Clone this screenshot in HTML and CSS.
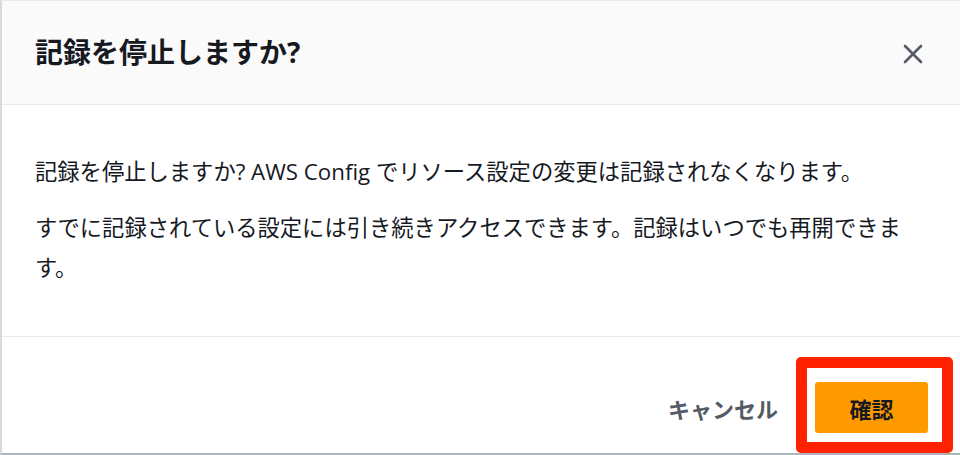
FILE: index.html
```html
<!DOCTYPE html>
<html lang="ja">
<head>
<meta charset="utf-8">
<title>記録を停止しますか?</title>
<link rel="stylesheet" href="styles.css">
</head>
<body>
<div class="modal">
  <div class="modal-header">
    <h2 class="modal-title">記録を停止しますか?</h2>
    <button class="close-btn" aria-label="閉じる">
      <svg width="20" height="20" viewBox="0 0 20 20" fill="none" stroke="#545b64" stroke-width="2.6" stroke-linecap="round">
        <path d="M2 2 L18 18 M18 2 L2 18"/>
      </svg>
    </button>
  </div>
  <div class="modal-body">
    <p>記録を停止しますか? AWS Config でリソース設定の変更は記録されなくなります。</p>
    <p>すでに記録されている設定には引き続きアクセスできます。記録はいつでも再開できます。</p>
  </div>
  <div class="modal-footer">
    <button class="btn-link">キャンセル</button>
    <div class="primary-wrap">
      <button class="btn-primary">確認</button>
      <div class="highlight"></div>
    </div>
  </div>
</div>
</body>
</html>
```

FILE: styles.css
```css
html, body {
  margin: 0;
  padding: 0;
  background: #ffffff;
}
body {
  width: 960px;
  height: 455px;
  overflow: hidden;
  font-family: "Open Sans", "Noto Sans CJK JP", sans-serif;
  color: #16191f;
}
.modal {
  box-sizing: border-box;
  height: 455px;
  border-top: 1px solid #e9ebed;
  border-left: 2px solid #d5dbdb;
  border-bottom: 2px solid #aab7b8;
  display: flex;
  flex-direction: column;
}
.modal-header {
  box-sizing: border-box;
  height: 104px;
  background: #fafafa;
  border-bottom: 1px solid #e9ebed;
  display: flex;
  align-items: center;
  justify-content: space-between;
  padding: 0 37px 0 33px;
}
.modal-title {
  margin: 0 0 4px 0;
  font-size: 28px;
  font-weight: 700;
  font-family: "Open Sans", "Noto Sans CJK JP", sans-serif;
  color: #16191f;
}
.close-btn {
  border: 0;
  background: transparent;
  padding: 0;
  width: 20px;
  height: 20px;
  margin-top: 2px;
  display: flex;
}
.modal-body {
  box-sizing: border-box;
  height: 232px;
  padding: 47px 45px 0 33px;
  border-bottom: 1px solid #e9ebed;
}
.modal-body p {
  margin: 0 0 16px 0;
  font-size: 22.3px;
  line-height: 40px;
}
.modal-footer {
  flex: 1;
  display: flex;
  justify-content: flex-end;
  align-items: flex-start;
  padding: 45px 32px 0 0;
  gap: 37px;
}
.btn-link {
  border: 0;
  background: transparent;
  padding: 0;
  height: 51px;
  font-family: "Open Sans", "Noto Sans CJK JP", sans-serif;
  font-size: 22px;
  font-weight: 700;
  color: #545b64;
}
.primary-wrap {
  position: relative;
}
.btn-primary {
  display: block;
  width: 113px;
  height: 51px;
  border: 0;
  border-radius: 3px;
  background: #ff9900;
  font-family: "Open Sans", "Noto Sans CJK JP", sans-serif;
  font-size: 22px;
  font-weight: 700;
  color: #16191f;
  padding: 0;
}
.highlight {
  position: absolute;
  top: -25px;
  left: -19px;
  right: -25px;
  bottom: -20px;
  border: 11px solid #ff2200;
  border-radius: 5px;
  pointer-events: none;
}
```
